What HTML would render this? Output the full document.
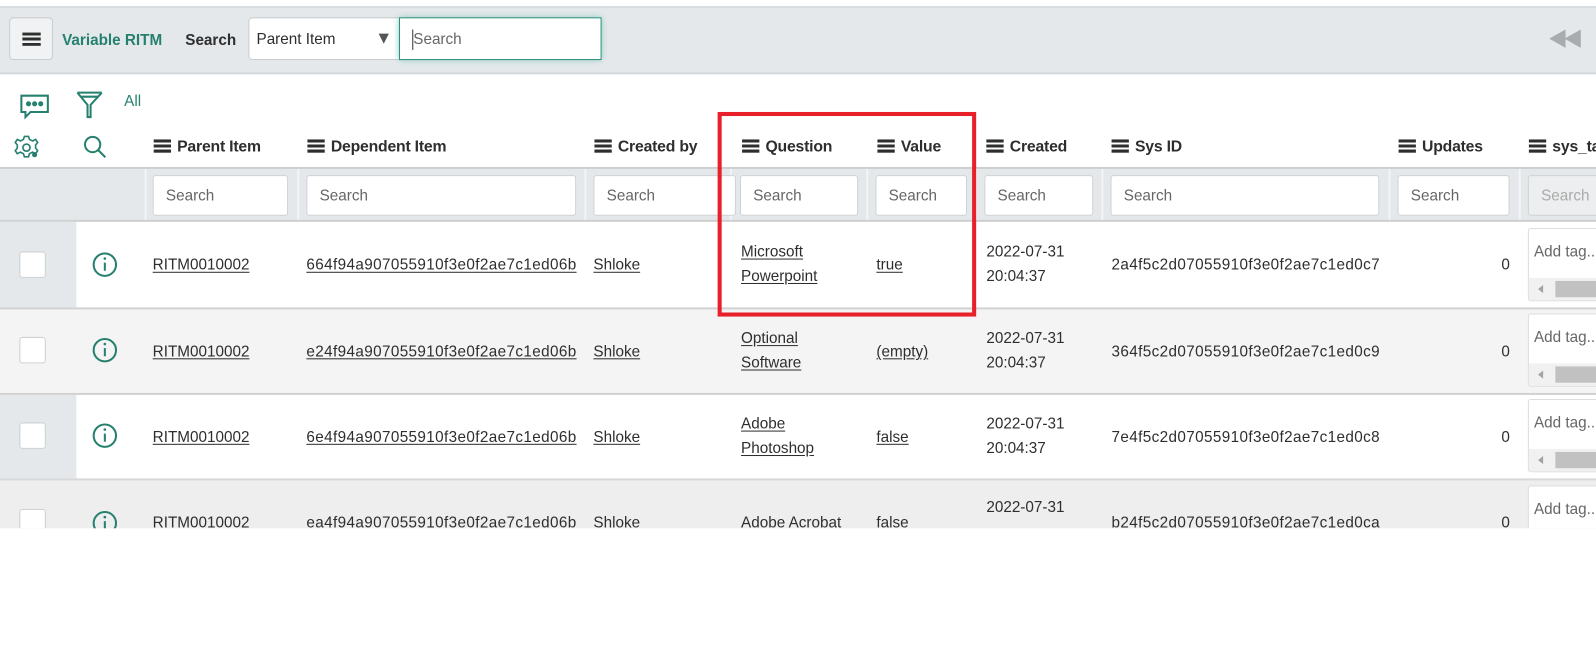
<!DOCTYPE html>
<html><head><meta charset="utf-8"><style>
*{box-sizing:border-box;margin:0;padding:0}
html,body{width:1596px;height:648px;overflow:hidden;background:#fff}
#w{position:absolute;left:0;top:0;width:1568px;height:637px;transform:scale(1.0179);transform-origin:0 0;font-family:"Liberation Sans",sans-serif;color:#2e2e2e;font-size:15px}
.a{position:absolute}
.hb{display:inline-block;width:17px;height:13px;vertical-align:-1px;margin-right:6px;background:linear-gradient(#2e2e2e 0 3px,transparent 3px 5px,#2e2e2e 5px 8px,transparent 8px 10px,#2e2e2e 10px 13px)}
.th{position:absolute;top:136px;font-size:15.5px;font-weight:bold;color:#2e2e2e;white-space:nowrap;letter-spacing:-0.2px}
.inp{position:absolute;top:172px;height:40px;background:#fff;border:1px solid #cfd3d6;border-radius:3px;color:#666;font-size:15px;padding:11px 0 0 12px}
.sep{position:absolute;top:166px;height:50px;width:2px;background:#f3f4f5}
.row{position:absolute;left:0;width:1568px}
.cb{position:absolute;left:19px;width:26px;height:26px;background:#fff;border:1px solid #cdd1d4;border-radius:3px}
.t{position:absolute;white-space:nowrap;line-height:24px}
.h{letter-spacing:0.37px}
u{text-decoration:underline;text-underline-offset:2px}
.tag{position:absolute;left:1501px;width:80px;height:72px;border:1px solid #ddd;border-radius:3px;background:#fff;overflow:hidden}
.tag span{position:absolute;left:5px;top:14px;color:#666}
.tag i{position:absolute;left:0;bottom:0;width:100%;height:22px;background:#f1f1f1}
.tag b{position:absolute;left:26px;bottom:3px;width:60px;height:16px;background:#c1c1c1}
.tag em{position:absolute;left:9px;bottom:7px;border-right:5px solid #a3a3a3;border-top:4px solid transparent;border-bottom:4px solid transparent}
</style></head><body><div id="w">
<div class="a" style="left:0;top:6px;width:1568px;height:67px;background:#e4e8eb;border-top:2px solid #d9dde0;border-bottom:2px solid #d5d9dc"></div>
<div class="a" style="left:9px;top:17px;width:43px;height:42px;background:#f1f2f3;border:1px solid #c9cdd0;border-radius:4px"><span class="hb" style="position:absolute;left:12px;top:14px;margin:0;width:18px"></span></div>
<div class="t" style="left:61px;top:28px;color:#26806f;font-weight:bold;font-size:15px">Variable RITM</div>
<div class="t" style="left:182px;top:28px;font-weight:bold;font-size:15px">Search</div>
<div class="a" style="left:244px;top:17px;width:150px;height:42px;background:#fff;border:1px solid #c9cdd0;border-radius:4px 0 0 4px"><span class="t" style="left:7px;top:9px">Parent Item</span><span class="a" style="left:127px;top:15px;border-top:10px solid #555;border-left:5px solid transparent;border-right:5px solid transparent"></span></div>
<div class="a" style="left:392px;top:17px;width:199px;height:42px;background:#fff;border:1px solid #2a8f7c;box-shadow:0 0 6px #7fc5b8"><span class="t" style="left:13px;top:9px;color:#666">Search</span><span class="a" style="left:12px;top:11px;width:1px;height:20px;background:#333"></span></div>
<div class="a" style="left:1522px;top:29px;border-right:16px solid #a9acaf;border-top:9px solid transparent;border-bottom:9px solid transparent"></div>
<div class="a" style="left:1537px;top:29px;border-right:16px solid #a9acaf;border-top:9px solid transparent;border-bottom:9px solid transparent"></div>
<svg class="a" style="left:18px;top:92px" width="32" height="26" viewBox="0 0 32 26" fill="none" stroke="#26806f" stroke-width="2"><path d="M3 2h26v16H12l-5 5v-5H3z"/><circle cx="10" cy="10" r="1.5" fill="#26806f"/><circle cx="16" cy="10" r="1.5" fill="#26806f"/><circle cx="22" cy="10" r="1.5" fill="#26806f"/></svg>
<svg class="a" style="left:74px;top:89px" width="28" height="30" viewBox="0 0 28 30" fill="none" stroke="#26806f" stroke-width="2"><path d="M2 2h24M2 2l10 12v12h3V14L26 2M6 6h16"/></svg>
<div class="t" style="left:122px;top:88px;color:#26806f">All</div>
<svg class="a" style="left:13px;top:132px" width="26" height="26" viewBox="0 0 26 26" fill="none" stroke="#26806f" stroke-width="1.6"><path d="M11 2h4l1 3 3 1.5 3-1.5 2 3-2 2.5v3l2 2.5-2 3-3-1.5-3 1.5-1 3h-4l-1-3-3-1.5-3 1.5-2-3 2-2.5v-3L2 8l2-3 3 1.5L10 5z"/><circle cx="13" cy="13" r="3.5"/><circle cx="21" cy="20" r="2.5" fill="#26806f" stroke="none"/></svg>
<svg class="a" style="left:81px;top:132px" width="26" height="26" viewBox="0 0 26 26" fill="none" stroke="#26806f" stroke-width="2"><circle cx="10" cy="10" r="7.5"/><path d="M15.5 15.5l7 7"/></svg>
<div class="th" style="left:151px"><span class="hb"></span>Parent Item</div>
<div class="th" style="left:302px"><span class="hb"></span>Dependent Item</div>
<div class="th" style="left:584px"><span class="hb"></span>Created by</div>
<div class="th" style="left:729px"><span class="hb"></span>Question</div>
<div class="th" style="left:862px"><span class="hb"></span>Value</div>
<div class="th" style="left:969px"><span class="hb"></span>Created</div>
<div class="th" style="left:1092px"><span class="hb"></span>Sys ID</div>
<div class="th" style="left:1374px"><span class="hb"></span>Updates</div>
<div class="th" style="left:1502px"><span class="hb"></span>sys_tags</div>
<div class="a" style="left:0;top:164px;width:1568px;height:54px;background:#e4e8eb;border-top:2px solid #cfcfcf;border-bottom:2px solid #cfcfcf"></div>
<div class="sep" style="left:142px"></div><div class="sep" style="left:292px"></div><div class="sep" style="left:574px"></div><div class="sep" style="left:717px"></div><div class="sep" style="left:851px"></div><div class="sep" style="left:958px"></div><div class="sep" style="left:1082px"></div><div class="sep" style="left:1364px"></div><div class="sep" style="left:1492px"></div>
<div class="inp" style="left:150px;width:133px">Search</div>
<div class="inp" style="left:301px;width:265px">Search</div>
<div class="inp" style="left:583px;width:140px">Search</div>
<div class="inp" style="left:727px;width:116px">Search</div>
<div class="inp" style="left:860px;width:90px">Search</div>
<div class="inp" style="left:967px;width:107px">Search</div>
<div class="inp" style="left:1091px;width:264px">Search</div>
<div class="inp" style="left:1373px;width:110px">Search</div>
<div class="inp" style="left:1501px;width:80px;background:#eceeef;color:#aaa">Search</div>
<div class="row" style="top:218px;height:84px;background:#fff"><div class="a" style="left:0;top:0;width:75px;height:84px;background:#e4e8eb"></div></div>
<div class="a" style="left:0;top:302px;width:1568px;height:2px;background:#d1d1d1"></div>
<div class="row" style="top:304px;height:82px;background:#f4f4f4"></div>
<div class="a" style="left:0;top:386px;width:1568px;height:2px;background:#d1d1d1"></div>
<div class="row" style="top:388px;height:82px;background:#fff"><div class="a" style="left:0;top:0;width:75px;height:82px;background:#e4e8eb"></div></div>
<div class="a" style="left:0;top:470px;width:1568px;height:2px;background:#d8d8d8"></div>
<div class="row" style="top:472px;height:47px;background:#eeeeee;overflow:hidden">
<div class="cb" style="top:28px"></div>
<svg class="a" style="left:90px;top:29px" width="26" height="26" viewBox="0 0 26 26" fill="none" stroke="#26806f" stroke-width="2"><circle cx="13" cy="13" r="11"/><path d="M13 11v8"/><circle cx="13" cy="7" r="1.3" fill="#26806f" stroke="none"/></svg>
<div class="t" style="left:150px;top:30px">RITM0010002</div>
<div class="t h" style="left:301px;top:30px">ea4f94a907055910f3e0f2ae7c1ed06b</div>
<div class="t" style="left:583px;top:30px">Shloke</div>
<div class="t" style="left:728px;top:30px">Adobe Acrobat</div>
<div class="t" style="left:861px;top:30px">false</div>
<div class="t" style="left:969px;top:15px">2022-07-31</div>
<div class="t h" style="left:1092px;top:30px">b24f5c2d07055910f3e0f2ae7c1ed0ca</div>
<div class="t" style="left:1475px;top:30px">0</div>
<div class="tag" style="top:5px"><span>Add tag...</span></div>
</div>
<div class="cb" style="top:247px"></div><div class="cb" style="top:331px"></div><div class="cb" style="top:415px"></div>
<svg class="a" style="left:90px;top:247px" width="26" height="26" viewBox="0 0 26 26" fill="none" stroke="#26806f" stroke-width="2"><circle cx="13" cy="13" r="11"/><path d="M13 11v8"/><circle cx="13" cy="7" r="1.3" fill="#26806f" stroke="none"/></svg>
<svg class="a" style="left:90px;top:331px" width="26" height="26" viewBox="0 0 26 26" fill="none" stroke="#26806f" stroke-width="2"><circle cx="13" cy="13" r="11"/><path d="M13 11v8"/><circle cx="13" cy="7" r="1.3" fill="#26806f" stroke="none"/></svg>
<svg class="a" style="left:90px;top:415px" width="26" height="26" viewBox="0 0 26 26" fill="none" stroke="#26806f" stroke-width="2"><circle cx="13" cy="13" r="11"/><path d="M13 11v8"/><circle cx="13" cy="7" r="1.3" fill="#26806f" stroke="none"/></svg>

<div class="t" style="left:150px;top:249px"><u>RITM0010002</u></div>
<div class="t h" style="left:301px;top:249px"><u>664f94a907055910f3e0f2ae7c1ed06b</u></div>
<div class="t" style="left:583px;top:249px"><u>Shloke</u></div>
<div class="t" style="left:728px;top:236px"><u>Microsoft</u></div>
<div class="t" style="left:728px;top:260px"><u>Powerpoint</u></div>
<div class="t" style="left:861px;top:249px"><u>true</u></div>
<div class="t" style="left:969px;top:236px">2022-07-31</div>
<div class="t" style="left:969px;top:260px">20:04:37</div>
<div class="t h" style="left:1092px;top:249px">2a4f5c2d07055910f3e0f2ae7c1ed0c7</div>
<div class="t" style="left:1475px;top:249px">0</div>
<div class="tag" style="top:224px"><span>Add tag...</span><i></i><b></b><em></em></div>

<div class="t" style="left:150px;top:334px"><u>RITM0010002</u></div>
<div class="t h" style="left:301px;top:334px"><u>e24f94a907055910f3e0f2ae7c1ed06b</u></div>
<div class="t" style="left:583px;top:334px"><u>Shloke</u></div>
<div class="t" style="left:728px;top:321px"><u>Optional</u></div>
<div class="t" style="left:728px;top:345px"><u>Software</u></div>
<div class="t" style="left:861px;top:334px"><u>(empty)</u></div>
<div class="t" style="left:969px;top:321px">2022-07-31</div>
<div class="t" style="left:969px;top:345px">20:04:37</div>
<div class="t h" style="left:1092px;top:334px">364f5c2d07055910f3e0f2ae7c1ed0c9</div>
<div class="t" style="left:1475px;top:334px">0</div>
<div class="tag" style="top:308px"><span>Add tag...</span><i></i><b></b><em></em></div>

<div class="t" style="left:150px;top:418px"><u>RITM0010002</u></div>
<div class="t h" style="left:301px;top:418px"><u>6e4f94a907055910f3e0f2ae7c1ed06b</u></div>
<div class="t" style="left:583px;top:418px"><u>Shloke</u></div>
<div class="t" style="left:728px;top:405px"><u>Adobe</u></div>
<div class="t" style="left:728px;top:429px"><u>Photoshop</u></div>
<div class="t" style="left:861px;top:418px"><u>false</u></div>
<div class="t" style="left:969px;top:405px">2022-07-31</div>
<div class="t" style="left:969px;top:429px">20:04:37</div>
<div class="t h" style="left:1092px;top:418px">7e4f5c2d07055910f3e0f2ae7c1ed0c8</div>
<div class="t" style="left:1475px;top:418px">0</div>
<div class="tag" style="top:392px"><span>Add tag...</span><i></i><b></b><em></em></div>

<div class="a" style="left:705px;top:110px;width:254px;height:201px;border:4px solid #e8202a"></div>
</div></body></html>
